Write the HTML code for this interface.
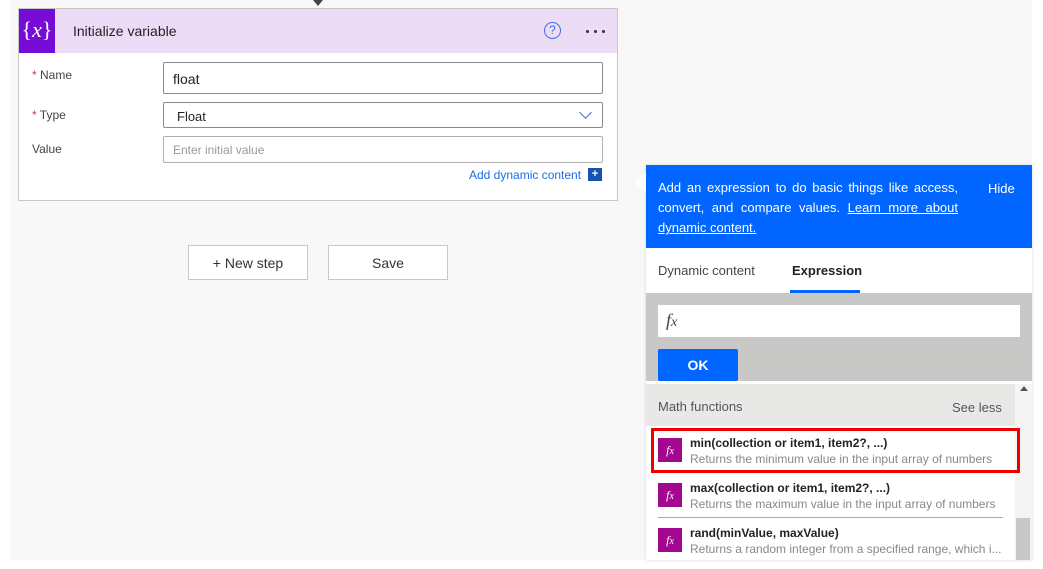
<!DOCTYPE html>
<html><head><style>
*{box-sizing:border-box;margin:0;padding:0}
body{width:1043px;height:569px;background:#fff;font-family:"Liberation Sans",sans-serif;position:relative;overflow:hidden}
.a{position:absolute}
.bg{left:10px;top:0;width:1022px;height:560px;background:#f8f8f8}
.inp{position:absolute;background:#fff;border:1px solid #8a8a8a;border-radius:2px;font-size:13px;color:#222;padding-left:9px}
.lbl{position:absolute;font-size:12px;color:#444}
.lbl b{color:#d13438;font-weight:normal}
.btn{position:absolute;background:#fff;border:1px solid #c8c8c8;font-size:14px;color:#333;text-align:center;line-height:34px}
.fx{position:absolute;width:24px;height:24px;background:#a4078f;color:#fff;font-family:"Liberation Serif",serif;font-style:italic;font-size:12px;text-align:center;line-height:24px}
.t1{position:absolute;font-size:12px;font-weight:bold;color:#222}
.t2{position:absolute;font-size:12px;color:#888;white-space:nowrap}
.dot{position:absolute;width:3px;height:3px;border-radius:50%;background:#333;top:30px}
</style></head><body>
<div class="a bg"></div>
<div class="a" style="left:313px;top:0;width:0;height:0;border-left:5px solid transparent;border-right:5px solid transparent;border-top:6px solid #444"></div>
<div class="a" style="left:18px;top:8px;width:600px;height:193px;background:#fff;border:1px solid #c8c8c8"></div>
<div class="a" style="left:19px;top:9px;width:598px;height:44px;background:#ecdcf6"></div>
<div class="a" style="left:19px;top:9px;width:36px;height:44px;background:#770bd6;color:#fff;font-family:'Liberation Serif',serif;font-size:22px;text-align:center;line-height:42px">{<i>x</i>}</div>
<div class="a" style="left:73px;top:23px;font-size:14px;color:#222">Initialize variable</div>
<div class="a" style="left:544px;top:22px;width:17px;height:17px;border:1.5px solid #3b6fe8;border-radius:50%;color:#3b6fe8;font-size:12px;text-align:center;line-height:14px">?</div>
<div class="dot" style="left:586px"></div><div class="dot" style="left:594px"></div><div class="dot" style="left:602px"></div>
<div class="lbl" style="left:32px;top:68px"><b>*</b> Name</div>
<div class="inp" style="left:163px;top:62px;width:440px;height:32px;line-height:32px;font-size:14px">float</div>
<div class="lbl" style="left:32px;top:108px"><b>*</b> Type</div>
<div class="inp" style="left:163px;top:102px;width:440px;height:26px;line-height:27px;font-size:13px;padding-left:13px">Float<span style="position:absolute;right:12px;top:5px;width:9px;height:9px;border-right:1px solid #3b6fe8;border-bottom:1px solid #3b6fe8;transform:rotate(45deg)"></span></div>
<div class="lbl" style="left:32px;top:142px">Value</div>
<div class="inp" style="left:163px;top:136px;width:440px;height:27px;line-height:27px;border-color:#b0b0b0;color:#999;font-size:12px">Enter initial value</div>
<div class="a" style="left:469px;top:168px;font-size:12px;color:#1b6ee6">Add dynamic content</div>
<div class="a" style="left:588px;top:168px;width:14px;height:13px;background:#1654b0;color:#fff;font-size:11px;text-align:center;line-height:13px;font-weight:bold">+</div>
<div class="btn" style="left:188px;top:245px;width:120px;height:35px">+ New step</div>
<div class="btn" style="left:328px;top:245px;width:120px;height:35px">Save</div>
<div class="a" style="left:646px;top:165px;width:386px;height:395px;background:#fff;box-shadow:0 0 3px rgba(0,0,0,.15)"></div>
<div class="a" style="left:634px;top:172px;width:0;height:0;border-top:10px solid transparent;border-bottom:10px solid transparent;border-right:12px solid #fff"></div>
<div class="a" style="left:646px;top:165px;width:386px;height:83px;background:#0066ff"></div>
<div class="a" style="left:658px;top:178px;width:300px;font-size:13px;color:#fff;line-height:20px;text-align:justify">Add an expression to do basic things like access, convert, and compare values. <u>Learn more about dynamic content.</u></div>
<div class="a" style="left:988px;top:181px;font-size:13px;color:#fff">Hide</div>
<div class="a" style="left:658px;top:263px;font-size:13px;color:#444">Dynamic content</div>
<div class="a" style="left:792px;top:263px;font-size:13px;color:#222;font-weight:bold">Expression</div>
<div class="a" style="left:790px;top:290px;width:70px;height:3px;background:#0066ff"></div>
<div class="a" style="left:646px;top:293px;width:386px;height:88px;background:#c8c9c7"></div>
<div class="a" style="left:658px;top:305px;width:362px;height:32px;background:#fff;font-family:'Liberation Serif',serif;font-style:italic;font-size:18px;color:#444;padding:5px 8px">f<span style="font-size:14px">x</span></div>
<div class="a" style="left:658px;top:349px;width:80px;height:32px;background:#0066ff;border-radius:2px;color:#fff;font-weight:bold;font-size:14px;text-align:center;line-height:32px">OK</div>
<div class="a" style="left:646px;top:384px;width:369px;height:42px;background:#e8e9e7"></div>
<div class="a" style="left:658px;top:399px;font-size:13px;color:#555">Math functions</div>
<div class="a" style="left:952px;top:400px;font-size:13px;color:#555">See less</div>
<div class="a" style="left:1015px;top:384px;width:17px;height:176px;background:#f4f4f4"></div>
<div class="a" style="left:1020px;top:386px;width:0;height:0;border-left:4px solid transparent;border-right:4px solid transparent;border-bottom:5px solid #555"></div>
<div class="a" style="left:1016px;top:518px;width:14px;height:42px;background:#c8c8c8"></div>
<div class="a" style="left:651px;top:428px;width:369px;height:45px;border:3px solid #e00"></div>
<div class="fx" style="left:658px;top:438px">f<span style="font-size:10px">x</span></div>
<div class="t1" style="left:690px;top:436px">min(collection or item1, item2?, ...)</div>
<div class="t2" style="left:690px;top:452px">Returns the minimum value in the input array of numbers</div>
<div class="fx" style="left:658px;top:483px">f<span style="font-size:10px">x</span></div>
<div class="t1" style="left:690px;top:481px">max(collection or item1, item2?, ...)</div>
<div class="t2" style="left:690px;top:497px">Returns the maximum value in the input array of numbers</div>
<div class="a" style="left:658px;top:517px;width:345px;height:1px;background:#aaa"></div>
<div class="fx" style="left:658px;top:528px">f<span style="font-size:10px">x</span></div>
<div class="t1" style="left:690px;top:526px">rand(minValue, maxValue)</div>
<div class="t2" style="left:690px;top:542px">Returns a random integer from a specified range, which i...</div>
</body></html>
